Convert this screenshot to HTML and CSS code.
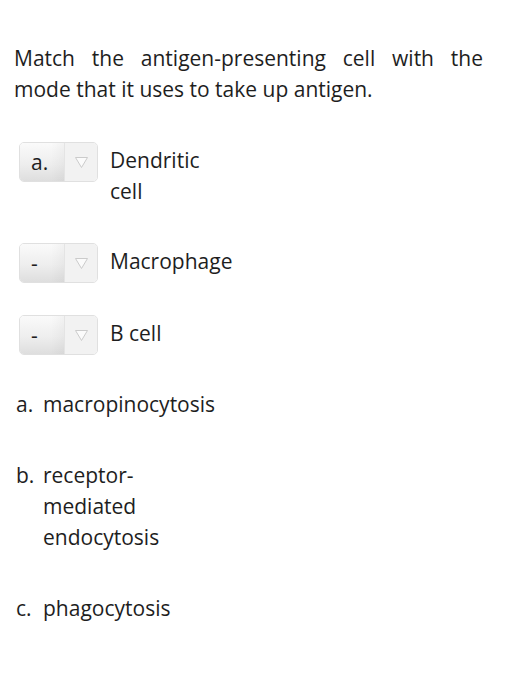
FILE: index.html
```html
<!DOCTYPE html>
<html>
<head>
<meta charset="utf-8">
<link rel="stylesheet" href="styles.css">
</head>
<body>
<div class="page">
  <p class="question">Match the antigen-presenting cell with the mode that it uses to take up antigen.</p>

  <div class="matches">
    <div class="select"><span class="sel-value">a.</span><span class="sel-arrow"><svg width="15" height="13" viewBox="0 0 15 13"><path d="M1.5 1.5 L13.5 1.5 L7.5 11.5 Z" fill="#fbfbfb" stroke="#cbcbcb" stroke-width="1" stroke-linejoin="round"/></svg></span></div>
    <div class="term">Dendritic cell</div>

    <div class="select"><span class="sel-value">-</span><span class="sel-arrow"><svg width="15" height="13" viewBox="0 0 15 13"><path d="M1.5 1.5 L13.5 1.5 L7.5 11.5 Z" fill="#fbfbfb" stroke="#cbcbcb" stroke-width="1" stroke-linejoin="round"/></svg></span></div>
    <div class="term">Macrophage</div>

    <div class="select"><span class="sel-value">-</span><span class="sel-arrow"><svg width="15" height="13" viewBox="0 0 15 13"><path d="M1.5 1.5 L13.5 1.5 L7.5 11.5 Z" fill="#fbfbfb" stroke="#cbcbcb" stroke-width="1" stroke-linejoin="round"/></svg></span></div>
    <div class="term">B cell</div>
  </div>

  <ol class="answers">
    <li class="answer"><span class="ans-label">a.</span><span class="ans-text">macropinocytosis</span></li>
    <li class="answer"><span class="ans-label">b.</span><span class="ans-text">receptor-<br>mediated endocytosis</span></li>
    <li class="answer"><span class="ans-label">c.</span><span class="ans-text">phagocytosis</span></li>
  </ol>
</div>
</body>
</html>
```

FILE: styles.css
```css
html, body {
  margin: 0;
  padding: 0;
  background: #ffffff;
}

body {
  font-family: "Open Sans", "Noto Sans", sans-serif;
  font-size: 21px;
  line-height: 31px;
  color: #1e1e1e;
}

.page {
  padding: 43px 36px 0 14px;
}

.question {
  margin: 0;
  text-align: justify;
}

.matches {
  display: grid;
  grid-template-columns: 79px 124px;
  column-gap: 12px;
  row-gap: 32px;
  align-items: start;
  margin: 37px 0 0 5px;
}

.select {
  display: flex;
  height: 40px;
  box-sizing: border-box;
  border: 1px solid #e0e0e0;
  border-radius: 5px;
  overflow: hidden;
}

.sel-value {
  width: 45px;
  box-sizing: border-box;
  padding-left: 11px;
  line-height: 38px;
  color: #1e1e1e;
  background:
    linear-gradient(to right, rgba(0,0,0,0) 70%, rgba(0,0,0,0.03) 100%),
    linear-gradient(to bottom, #fafafa 0%, #eeeeee 55%, #dedede 100%);
  border-right: 1px solid #e4e4e4;
}

.sel-arrow {
  flex: 1;
  display: flex;
  align-items: center;
  justify-content: center;
  background: #f2f2f2;
}

.term {
  padding-top: 3px;
  padding-bottom: 4px;
}

.answers {
  list-style: none;
  margin: 34px 0 0 2px;
  padding: 0;
  display: flex;
  flex-direction: column;
  gap: 40px;
}

.answer {
  display: flex;
}

.ans-label {
  width: 27px;
  flex: none;
}

.ans-text {
  width: 190px;
}
```
